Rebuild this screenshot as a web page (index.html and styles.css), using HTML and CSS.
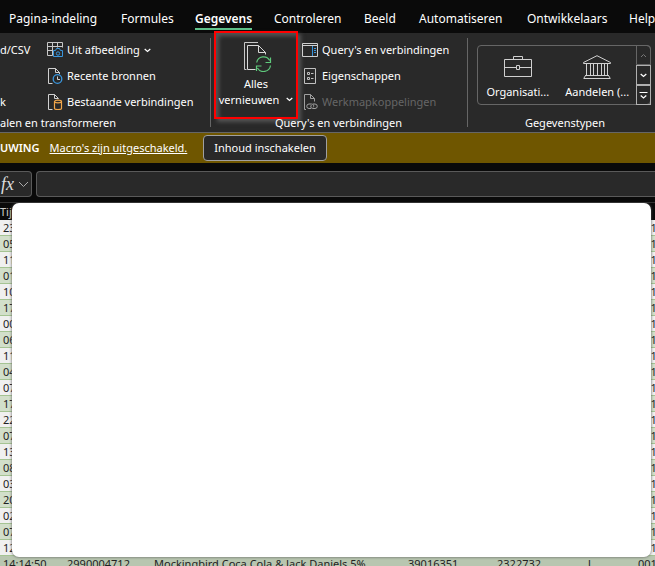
FILE: index.html
```
<!DOCTYPE html>
<html lang="nl">
<head>
<meta charset="utf-8">
<title>Gegevens</title>
<link rel="stylesheet" href="styles.css">
</head>
<body>
<nav class="tabs">
  <a href="#">Pagina-indeling</a>
  <a href="#">Formules</a>
  <a href="#" class="active">Gegevens</a>
  <a href="#">Controleren</a>
  <a href="#">Beeld</a>
  <a href="#">Automatiseren</a>
  <a href="#">Ontwikkelaars</a>
  <a href="#">Help</a>
</nav>

<section class="ribbon">
  <div class="group get">
    <div class="body">
      <div class="stack sources">
        <button>d/CSV</button>
        <span></span>
        <button>k</button>
      </div>
      <div class="stack">
        <button>
          <svg width="16" height="16" viewBox="0 0 16 16" fill="none"><path d="M5.500 13.500H.5V.5h15v5M.5 4.500h15M.5 8.500h5M5.500.5v13M10.500.5v5" stroke="#c8c8c8"/><path d="M6.500 8.500h2l1-2h3l1 2h2v6h-9z" stroke="#3a96dd"/><circle cx="11" cy="11.500" r="1.700" stroke="#3a96dd"/></svg>
          Uit afbeelding
          <svg class="chev" width="7" height="5" viewBox="0 0 7 5"><path d="M.7 1l2.800 2.500L6.300 1" fill="none" stroke="#fff" stroke-width="1.200"/></svg>
        </button>
        <button>
          <svg width="16" height="16" viewBox="0 0 16 16" fill="none"><path d="M5.500 15.500h-4V.5h7l4 4v1.500M8.500.5v4h4" stroke="#d0d0d0"/><circle cx="10.500" cy="11" r="4.300" stroke="#3a96dd" stroke-width="1.300"/><path d="M10.500 8.500V11.500h2.500" stroke="#d0d0d0"/></svg>
          Recente bronnen
        </button>
        <button>
          <svg width="16" height="16" viewBox="0 0 16 16" fill="none"><path d="M5.500 15.500h-4V.5h6l4 4M7.500.5v4h4" stroke="#d0d0d0"/><path d="M7.500 7.500v7c0 1.400 7 1.400 7 0v-7" stroke="#f2a74b" stroke-width="1.200"/><ellipse cx="11" cy="7.500" rx="3.500" ry="1.300" stroke="#f2a74b" stroke-width="1.200"/></svg>
          Bestaande verbindingen
        </button>
      </div>
    </div>
    <h2>alen en transformeren</h2>
  </div>

  <div class="group links">
    <div class="body">
      <button class="refresh">
        <svg width="28" height="30" viewBox="0 0 28 30" fill="none"><path d="M14 .5H.5v27h2" stroke="#c8c8c8"/><path d="M11.500 27.500h-8V3.500h11l7 7v2M14.500 3.500v7h7" stroke="#d8d8d8"/><path d="M12.700 20.500a7 7 0 0 1 13-2M26.500 15.500v5h-5M26.500 23.500a7 7 0 0 1-13 2.500M12.500 29v-5h5" stroke="#5fc97c" stroke-width="1.200"/></svg>
        <span>Alles</span>
        <span>vernieuwen <svg class="chev" width="7" height="5" viewBox="0 0 7 5"><path d="M.7 1l2.800 2.500L6.300 1" fill="none" stroke="#fff" stroke-width="1.200"/></svg></span>
      </button>
      <div class="stack">
        <button>
          <svg width="16" height="16" viewBox="0 0 16 16" fill="none"><path d="M.5 1.500h15v13H.5zM.5 3.500h15" stroke="#d0d0d0"/><path d="M10.500 4v10M12 6.500h2M12 8.500h2M12 10.500h2" stroke="#3a96dd"/></svg>
          Query's en verbindingen
        </button>
        <button>
          <svg width="16" height="16" viewBox="0 0 16 16" fill="none"><path d="M2.500.5h11v15h-11zM5.500 4.500h2v2h-2zM5.500 9.500h2v2h-2zM9 5.500h2.500M9 10.500h2.500" stroke="#c0c0c0"/></svg>
          Eigenschappen
        </button>
        <button disabled>
          <svg width="16" height="16" viewBox="0 0 16 16" fill="none"><path d="M4 15.500H2.500V.5h6l4 4v3M8.500.5v4h4" stroke="#a0a0a0"/><path d="M9 14.500H7a2 2 0 0 1 0-4.500h2.500a2 2 0 0 1 1.500 3.500M11 10h2a2 2 0 0 1 0 4.500h-2.500a2 2 0 0 1-1-3.500" stroke="#a0a0a0"/></svg>
          Werkmapkoppelingen
        </button>
      </div>
    </div>
    <h2>Query's en verbindingen</h2>
  </div>

  <div class="group types">
    <div class="gallery">
      <button>
        <svg width="28" height="26" viewBox="0 0 28 26" fill="none"><path d="M.5 4.500h27v17H.5zM9.500 4.500v-3h9v3M.5 12.500h12M15.500 12.500h12M12.500 10.500h3v4h-3z" stroke="#d0d0d0"/></svg>
        Organisati...
      </button>
      <button>
        <svg width="28" height="26" viewBox="0 0 28 26" fill="none"><path d="M.5 7.500L14 .7l13.500 6.800v1H.5zM3.500 8.500v12M7.500 8.500v12M10.500 8.500v12M14.500 8.500v12M18.500 8.500v12M21.500 8.500v12M24.500 8.500v12M2 20.500h24M.5 23.500h27M1 23l1.500-2.500M27 23l-1.500-2.500" stroke="#d0d0d0"/></svg>
        Aandelen (...
      </button>
      <div class="scroll">
        <button disabled aria-label="Omhoog"><svg width="7" height="5" viewBox="0 0 7 5"><path d="M1 4l2.500-2.500L6 4" fill="none" stroke="#777"/></svg></button>
        <button aria-label="Omlaag"><svg width="7" height="5" viewBox="0 0 7 5"><path d="M.7 1l2.800 2.500L6.300 1" fill="none" stroke="#fff" stroke-width="1.300"/></svg></button>
        <button aria-label="Meer"><svg width="9" height="9" viewBox="0 0 9 9"><path d="M.5 1.500h8M1.700 4.500l2.800 2.500 2.800-2.500" fill="none" stroke="#fff" stroke-width="1.200"/></svg></button>
      </div>
    </div>
    <h2>Gegevenstypen</h2>
  </div>
</section>

<section class="warning">
  <strong>UWING</strong>
  <a href="#">Macro's zijn uitgeschakeld.</a>
  <button>Inhoud inschakelen</button>
</section>

<section class="formula">
  <button class="fx" aria-label="Functie invoegen"><i>fx</i><svg width="11" height="7" viewBox="0 0 11 7"><path d="M1 1l4.500 4.500L10 1" fill="none" stroke="#aaa"/></svg></button>
  <input type="text" aria-label="Formulebalk">
</section>

<main class="sheet">
  <table>
    <colgroup><col class="c-time"><col class="c-id"><col class="c-name"><col class="c-code"><col class="c-art"><col class="c-unit"><col class="c-last"></colgroup>
    <thead><tr><th>Tij</th><th></th><th></th><th></th><th></th><th></th><th></th></tr></thead>
    <tbody>
      <tr><td>23</td><td></td><td></td><td></td><td></td><td></td><td>001</td></tr>
      <tr><td>05</td><td></td><td></td><td></td><td></td><td></td><td>001</td></tr>
      <tr><td>11</td><td></td><td></td><td></td><td></td><td></td><td>001</td></tr>
      <tr><td>01</td><td></td><td></td><td></td><td></td><td></td><td>001</td></tr>
      <tr><td>10</td><td></td><td></td><td></td><td></td><td></td><td>001</td></tr>
      <tr><td>17</td><td></td><td></td><td></td><td></td><td></td><td>001</td></tr>
      <tr><td>00</td><td></td><td></td><td></td><td></td><td></td><td>001</td></tr>
      <tr><td>06</td><td></td><td></td><td></td><td></td><td></td><td>001</td></tr>
      <tr><td>11</td><td></td><td></td><td></td><td></td><td></td><td>001</td></tr>
      <tr><td>04</td><td></td><td></td><td></td><td></td><td></td><td>001</td></tr>
      <tr><td>07</td><td></td><td></td><td></td><td></td><td></td><td>001</td></tr>
      <tr><td>17</td><td></td><td></td><td></td><td></td><td></td><td>001</td></tr>
      <tr><td>22</td><td></td><td></td><td></td><td></td><td></td><td>001</td></tr>
      <tr><td>07</td><td></td><td></td><td></td><td></td><td></td><td>001</td></tr>
      <tr><td>13</td><td></td><td></td><td></td><td></td><td></td><td>001</td></tr>
      <tr><td>08</td><td></td><td></td><td></td><td></td><td></td><td>001</td></tr>
      <tr><td>03</td><td></td><td></td><td></td><td></td><td></td><td>001</td></tr>
      <tr><td>20</td><td></td><td></td><td></td><td></td><td></td><td>001</td></tr>
      <tr><td>02</td><td></td><td></td><td></td><td></td><td></td><td>001</td></tr>
      <tr><td>07</td><td></td><td></td><td></td><td></td><td></td><td>001</td></tr>
      <tr><td>12</td><td></td><td></td><td></td><td></td><td></td><td>001</td></tr>
      <tr><td>14:14:50</td><td>2990004712</td><td>Mockingbird Coca Cola &amp; Jack Daniels 5%</td><td>39016351</td><td>2322732</td><td>l</td><td>001</td></tr>
    </tbody>
  </table>
  <div class="panel"></div>
</main>
</body>
</html>
```
FILE: styles.css
```
* { box-sizing: border-box; }

body {
  margin: 0;
  height: 100vh;
  display: flex;
  flex-direction: column;
  overflow: hidden;
  background: #0a0a0a;
  color: #fff;
  font: 11px/16px "Noto Sans", "Open Sans", sans-serif;
}

button {
  padding: 0;
  border: 0;
  background: none;
  color: inherit;
  font: inherit;
  white-space: nowrap;
}

svg { flex: none; }

.tabs {
  flex: none;
  display: grid;
  grid-template-columns: 112px 74px 79px 90px 55px 108px 102px auto;
  justify-content: start;
  height: 33px;
  padding: 10px 0 3px 9px;
  font-size: 12px;
}

.tabs a {
  justify-self: start;
  color: inherit;
  text-decoration: none;
  line-height: 18px;
  white-space: nowrap;
}

.tabs .active {
  font-weight: 600;
  border-bottom: 2px solid #5fc18a;
}

.ribbon {
  flex: none;
  display: flex;
  height: 100px;
  background: #292929;
  border-bottom: 1px solid #666;
}

.group {
  display: flex;
  flex-direction: column;
  justify-content: space-between;
  position: relative;
  padding: 4px 0 1px;
}

.group + .group::before {
  content: "";
  position: absolute;
  left: 0;
  top: 5px;
  bottom: 5px;
  width: 1px;
  background: #666;
}

.get { flex: 0 0 210px; }
.links { flex: 0 0 257px; }
.types { flex: 1 0 188px; }

.group h2 {
  margin: 0;
  font-size: 11px;
  font-weight: 400;
  text-align: center;
  white-space: nowrap;
}

.get h2 { text-align: left; }
.types h2 { padding-left: 8px; }

.body { display: flex; }

.stack {
  display: grid;
  grid-template-rows: repeat(3, 26px);
}

.stack button {
  display: flex;
  align-items: center;
  gap: 4px;
}

.sources { flex: 0 0 47px; }

.stack button:disabled { color: #666; }

.refresh {
  flex: none;
  display: flex;
  flex-direction: column;
  align-items: center;
  width: 84px;
  height: 88px;
  margin: -6px 4px -4px;
  padding-top: 9px;
  border: 2px solid #f00;
  box-shadow: 3px 3px 4px #555, inset 3px 3px 4px #555;
}

.refresh svg:first-child {
  margin: 0 0 4px 4px;
}

.refresh .chev { vertical-align: middle; }

.gallery {
  display: flex;
  height: 60px;
  margin: 8px 4px 0 10px;
  border: 1px solid #666;
  border-radius: 4px;
}

.gallery > button {
  flex: 1;
  display: flex;
  flex-direction: column;
  align-items: center;
  justify-content: space-between;
  padding: 9px 0 4px;
}

.scroll {
  flex: 0 0 15px;
  display: grid;
  grid-template-rows: repeat(3, 1fr);
  margin: -1px;
}

.scroll button {
  display: grid;
  place-items: center;
  border: 1px solid #b0b0b0;
}

.scroll button:disabled {
  border-color: #666;
  border-top-right-radius: 4px;
}

.warning {
  flex: none;
  display: flex;
  align-items: center;
  height: 30px;
  background: #6f5600;
}

.warning strong {
  flex: 0 0 36px;
  display: flex;
  justify-content: flex-end;
  font-weight: 600;
}

.warning a {
  margin: 0 16px 0 10px;
  color: inherit;
}

.warning button {
  height: 26px;
  padding: 0 10px;
  border: 1px solid #a0a0a0;
  border-radius: 4px;
  background: #292929;
}

.formula {
  flex: none;
  display: flex;
  gap: 4px;
  height: 40px;
  padding: 8px 0 5px;
  border-bottom: 1px solid #333;
}

.fx {
  display: flex;
  align-items: center;
  justify-content: space-between;
  width: 32px;
  padding: 0 2px 0 1px;
  border: 1px solid #5a5a5a;
  border-left: 0;
  border-radius: 0 4px 4px 0;
  background: #292929;
  color: #ddd;
  font: 18px/20px "Liberation Serif", serif;
}

.formula input {
  flex: 1;
  min-width: 0;
  border: 1px solid #5a5a5a;
  border-right: 0;
  border-radius: 4px 0 0 4px;
  background: #292929;
  color: #fff;
}

.sheet {
  flex: 1;
  position: relative;
  min-height: 0;
  overflow: hidden;
}

table {
  width: 100%;
  table-layout: fixed;
  border-collapse: separate;
  border-spacing: 0;
  color: #222;
  font-size: 11px;
}

.c-time { width: 64px; }
.c-id { width: 87px; }
.c-name { width: 254px; }
.c-code { width: 89px; }
.c-art { width: 91px; }
.c-unit { width: 50px; }

th, td {
  height: 16px;
  padding: 0 0 0 3px;
  text-align: left;
  font-weight: 400;
  line-height: 15px;
  white-space: nowrap;
}

th {
  height: 17px;
  padding: 0;
  color: #ccc;
}

td {
  background: #f0f0f0;
  border-bottom: 1px solid #a5c493;
}

tr:nth-child(even) td { background: #d2dfca; }
tr:last-child td { background: #b8c6b0; }

.panel {
  position: absolute;
  inset: 0 4px 9px 12px;
  border-radius: 7px;
  background: #fff;
  box-shadow: 0 0 3px #555;
}
```
